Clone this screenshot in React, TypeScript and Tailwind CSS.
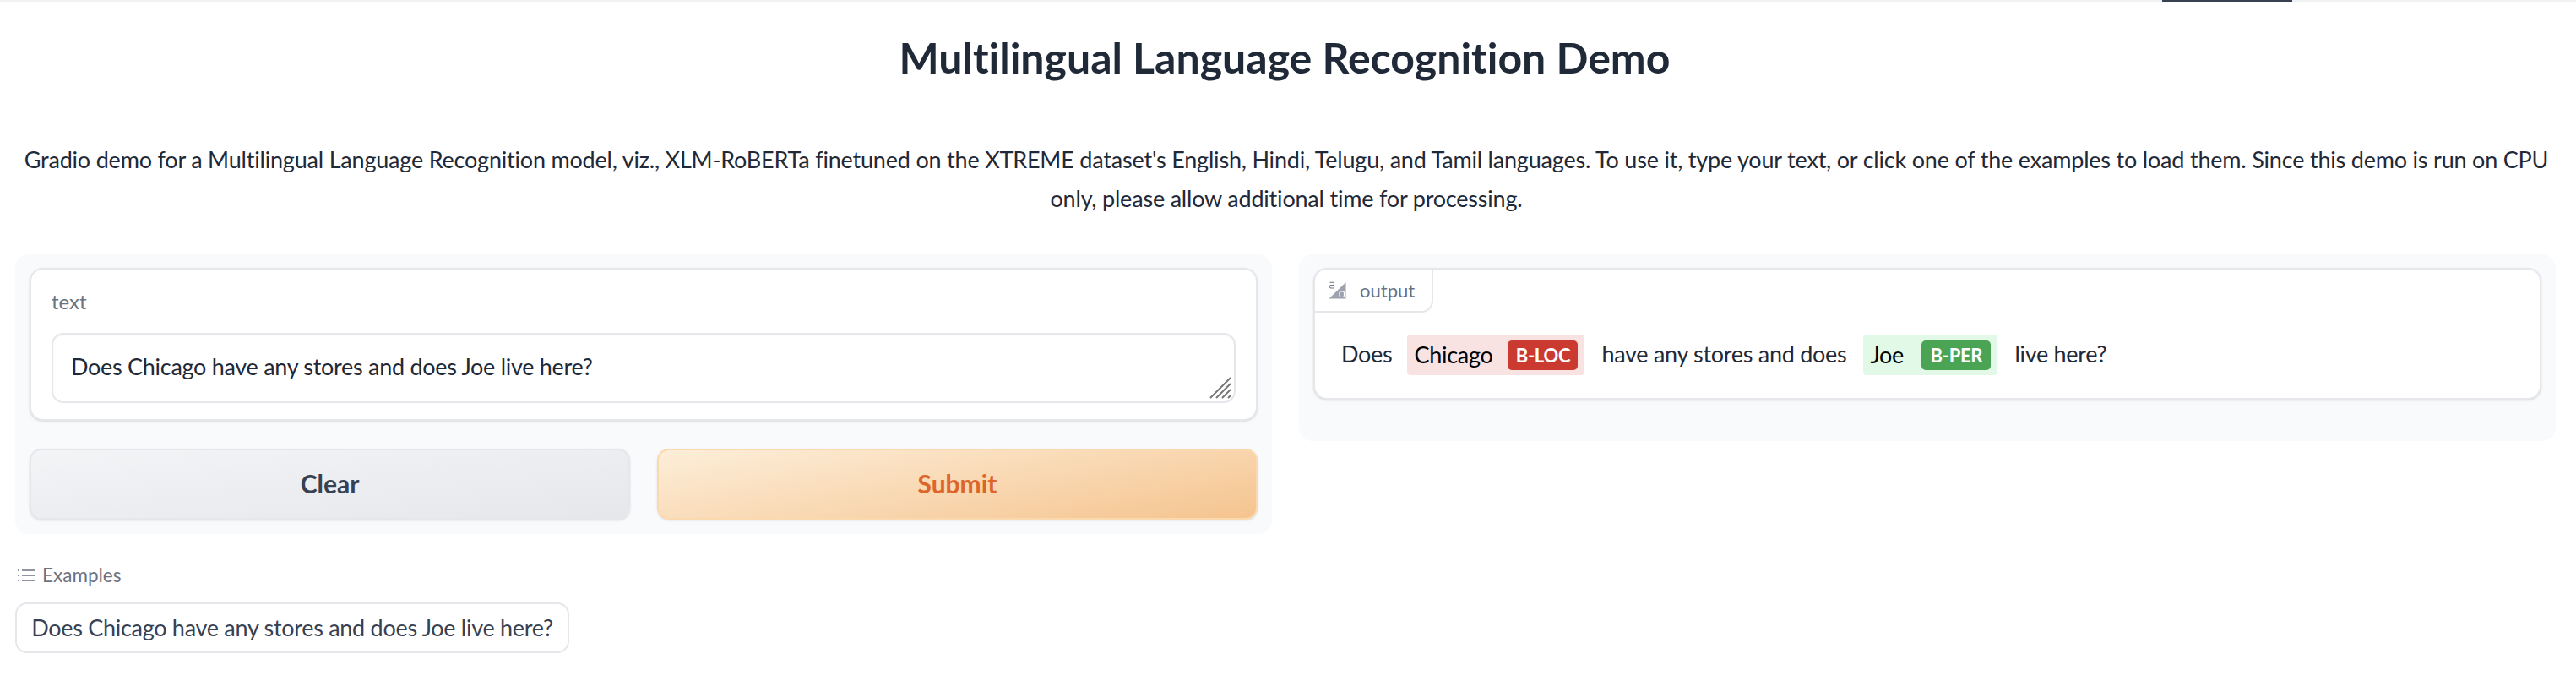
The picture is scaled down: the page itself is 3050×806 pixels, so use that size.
const font = "font-['Lato','Noto_Sans',sans-serif] [font-variant-ligatures:none]";

function ResizeHandle() {
  return (
    <svg className="absolute right-[3px] bottom-[3px]" width="26" height="26" viewBox="0 0 26 26" fill="none" stroke="#777" strokeWidth="2">
      <path d="M1 25L25 1M8 25L25 8M15 25L25 15M22 25L25 22" />
    </svg>
  );
}

function OutputIcon() {
  return (
    <svg width="21" height="21" viewBox="0 0 21 21" fill="none">
      <path d="M20.5 1L0.5 20.5H20.5Z" fill="#9ca3af" />
      <rect x="13" y="12" width="5.5" height="6.5" rx="1.8" fill="#9ca3af" stroke="#fff" strokeWidth="1.2" />
      <path d="M1.5 1.2H6.5V8H2.8C1.2 8 1.2 4.8 2.8 4.6H6.3" stroke="#6b7280" strokeWidth="1.1" />
    </svg>
  );
}

function ListIcon() {
  return (
    <svg width="20" height="16" viewBox="0 0 20 16" fill="none" stroke="#6b7280" strokeWidth="1.4">
      <path d="M5 2H20M5 8H20M5 14H20" />
      <path d="M0 2H2M0 8H2M0 14H2" strokeDasharray="1 0.5" />
    </svg>
  );
}

function Highlight({ text, label, bg, badge, w, bw }: { text: string; label: string; bg: string; badge: string; w: string; bw: string }) {
  return (
    <span className={`flex h-[48px] items-center justify-between rounded-[4px] pl-[8px] pr-[8px] text-black ${bg} ${w}`}>
      <span>{text}</span>
      <span className={`flex h-[35px] items-center justify-center rounded-[5px] text-[22px] font-bold text-white ${badge} ${bw}`}>{label}</span>
    </span>
  );
}

export default function App() {
  return (
    <div className={`${font} h-[806px] w-[3050px] overflow-hidden bg-white text-[#1f2937]`}>
      <div className="flex h-[2px] justify-start bg-[#f0f1f2] pl-[2560px]">
        <div className="h-[2px] w-[154px] bg-[#374151]" />
      </div>
      <h1 className="mt-[38px] pr-[8px] text-center text-[50px] leading-[56px] font-bold">Multilingual Language Recognition Demo</h1>
      <p className="mx-auto mt-[70px] w-[3000px] pr-[4px] text-center text-[27px] leading-[46px] tracking-[-0.2px] text-[#1f2937]">
        Gradio demo for a Multilingual Language Recognition model, viz., XLM-RoBERTa finetuned on the XTREME dataset's English, Hindi, Telugu, and Tamil languages. To use it, type your text, or click one of the examples to load them. Since this demo is run on CPU only, please allow additional time for processing.
      </p>
      <div className="mt-[43px] flex items-start gap-[32px] px-[18px]">
        <div className="flex h-[331px] w-[1488px] flex-col gap-[33px] rounded-[16px] bg-[#f9fafb] px-[17px] pt-[16px] pb-[16px]">
          <div className="h-[181px] rounded-[16px] border-2 border-[#e5e7eb] bg-white px-[24px] pt-[20px] shadow-sm">
            <div className="text-[24px] leading-[36px] text-[#6b7280]">text</div>
            <div className="relative mt-[19px] flex h-[83px] items-center rounded-[14px] border-2 border-[#e5e7eb] px-[21px] pb-[3px] text-[27px] tracking-[-0.29px] shadow-[inset_0_1px_2px_rgba(0,0,0,0.05)]">
              Does Chicago have any stores and does Joe live here?
              <ResizeHandle />
            </div>
          </div>
          <div className="flex gap-[32px]">
            <button className="h-[84px] flex-1 rounded-[14px] border-2 border-[#e5e7eb] bg-gradient-to-br from-[#f3f4f6] to-[#e5e7eb] pb-[2px] text-[30px] font-bold text-[#374151] shadow-sm">Clear</button>
            <button className="h-[84px] flex-1 rounded-[14px] border-2 border-[#fbd9ae] bg-[linear-gradient(170deg,#fdeed9,#f5c48f)] pb-[2px] text-[30px] font-bold text-[#dd6529] shadow-sm">Submit</button>
          </div>
        </div>
        <div className="h-[221px] w-[1488px] rounded-[16px] bg-[#f9fafb] px-[17px] pt-[16px]">
          <div className="h-[156px] rounded-[16px] border-2 border-[#e5e7eb] bg-white shadow-sm">
            <div className="flex h-[51px] w-[140px] items-center gap-[16px] rounded-br-[14px] border-r-2 border-b-2 border-[#e5e7eb] pl-[16px] text-[22px] text-[#6b7280]">
              <OutputIcon />
              output
            </div>
            <div className="mt-[26px] flex items-center pl-[31px] text-[27px] tracking-[-0.29px]">
              <span className="-mt-[2px]">Does</span>
              <span className="ml-[18px]"><Highlight text="Chicago" label="B-LOC" bg="bg-[#f8e2e2]" badge="bg-[#cb3a30]" w="w-[210px]" bw="w-[83px]" /></span>
              <span className="ml-[20px] -mt-[2px]">have any stores and does</span>
              <span className="ml-[20px]"><Highlight text="Joe" label="B-PER" bg="bg-[#e2f9e8]" badge="bg-[#4ba354]" w="w-[159px]" bw="w-[82px]" /></span>
              <span className="ml-[20px] -mt-[2px]">live here?</span>
            </div>
          </div>
        </div>
      </div>
      <div className="mt-[37px] flex items-center gap-[9px] pl-[21px] text-[22.5px] leading-[24px] text-[#6b7280]">
        <ListIcon />
        Examples
      </div>
      <button className="mt-[20px] ml-[18px] flex h-[60px] w-[656px] items-center justify-center rounded-[14px] border-2 border-[#e5e7eb] bg-white text-[27px] tracking-[-0.29px] text-[#374151]">
        Does Chicago have any stores and does Joe live here?
      </button>
    </div>
  );
}
